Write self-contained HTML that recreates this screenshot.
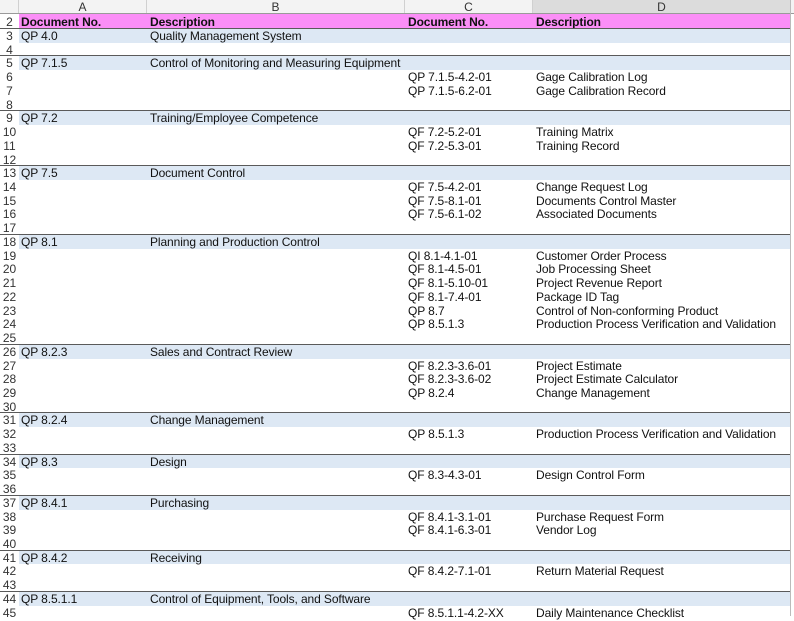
<!DOCTYPE html>
<html><head><style>
body{margin:0;width:794px;height:616px;overflow:hidden;background:#fff;font-family:"Liberation Sans",Arial,sans-serif;font-size:12px;color:#111;position:relative}
.hdr{position:absolute;top:0;left:0;width:794px;height:13px;background:#f3f3f3;border-bottom:1px solid #9a9a9a}
.hdr div{position:absolute;top:0;height:13px;line-height:14px;text-align:center;color:#333;font-size:12px;border-right:1px solid #d0d0d0}
.r{position:absolute;left:0;width:790px;height:13.73px;line-height:15px;white-space:nowrap;letter-spacing:-0.1px}
.r span{position:absolute;top:0}
.n{left:0;width:19px;text-align:center;font-size:12px;color:#333;letter-spacing:0;font-weight:normal}
.a{left:21px}.b{left:150px}.c{left:408px}.d{left:536px}
.g{background:linear-gradient(to right,#fff 0,#fff 19px,#dde8f4 19px)}
.g::before{content:"";position:absolute;left:0;right:0;top:-1px;height:1px;background:#5a5a5a}
.p{background:linear-gradient(to right,#fff 0,#fff 19px,#fb8ef7 19px);font-weight:bold;height:15px;line-height:16px;border-bottom:1px solid #555}
</style></head><body>
<div class="hdr"><div style="left:0;width:18px"></div><div style="left:19px;width:127px">A</div><div style="left:147px;width:257px">B</div><div style="left:405px;width:127px">C</div><div style="left:533px;width:257px;background:#dcdcdc">D</div></div>
<div style="position:absolute;left:790px;top:0;width:1px;height:616px;background:#bbb"></div>
<div class="r p" style="top:14px"><span class="n">2</span><span class="a">Document No.</span><span class="b">Description</span><span class="c">Document No.</span><span class="d">Description</span></div>
<div id="rows"></div>
<script>
var rows={3:["QP 4.0","Quality Management System"],5:["QP 7.1.5","Control of Monitoring and Measuring Equipment"],6:[,,"QP 7.1.5-4.2-01","Gage Calibration Log"],7:[,,"QP 7.1.5-6.2-01","Gage Calibration Record"],9:["QP 7.2","Training/Employee Competence"],10:[,,"QF 7.2-5.2-01","Training Matrix"],11:[,,"QF 7.2-5.3-01","Training Record"],13:["QP 7.5","Document Control"],14:[,,"QF 7.5-4.2-01","Change Request Log"],15:[,,"QF 7.5-8.1-01","Documents Control Master"],16:[,,"QF 7.5-6.1-02","Associated Documents"],18:["QP 8.1","Planning and Production Control"],19:[,,"QI 8.1-4.1-01","Customer Order Process"],20:[,,"QF 8.1-4.5-01","Job Processing Sheet"],21:[,,"QF 8.1-5.10-01","Project Revenue Report"],22:[,,"QF 8.1-7.4-01","Package ID Tag"],23:[,,"QP 8.7","Control of Non-conforming Product"],24:[,,"QP 8.5.1.3","Production Process Verification and Validation"],26:["QP 8.2.3","Sales and Contract Review"],27:[,,"QF 8.2.3-3.6-01","Project Estimate"],28:[,,"QF 8.2.3-3.6-02","Project Estimate Calculator"],29:[,,"QP 8.2.4","Change Management"],31:["QP 8.2.4","Change Management"],32:[,,"QP 8.5.1.3","Production Process Verification and Validation"],34:["QP 8.3","Design"],35:[,,"QF 8.3-4.3-01","Design Control Form"],37:["QP 8.4.1","Purchasing"],38:[,,"QF 8.4.1-3.1-01","Purchase Request Form"],39:[,,"QF 8.4.1-6.3-01","Vendor Log"],41:["QP 8.4.2","Receiving"],42:[,,"QF 8.4.2-7.1-01","Return Material Request"],44:["QP 8.5.1.1","Control of Equipment, Tools, and Software"],45:[,,"QF 8.5.1.1-4.2-XX","Daily Maintenance Checklist"]};
var h="";
for(var i=3;i<=45;i++){var d=rows[i]||[],g=d[0]?" g":"";var t=29+(i-3)*13.73;
h+='<div class="r'+g+'" style="top:'+t+'px"><span class="n">'+i+'</span>'+(d[0]?'<span class="a">'+d[0]+'</span>':'')+(d[1]?'<span class="b">'+d[1]+'</span>':'')+(d[2]?'<span class="c">'+d[2]+'</span>':'')+(d[3]?'<span class="d">'+d[3]+'</span>':'')+'</div>';}
document.getElementById("rows").innerHTML=h;
</script>
</body></html>
